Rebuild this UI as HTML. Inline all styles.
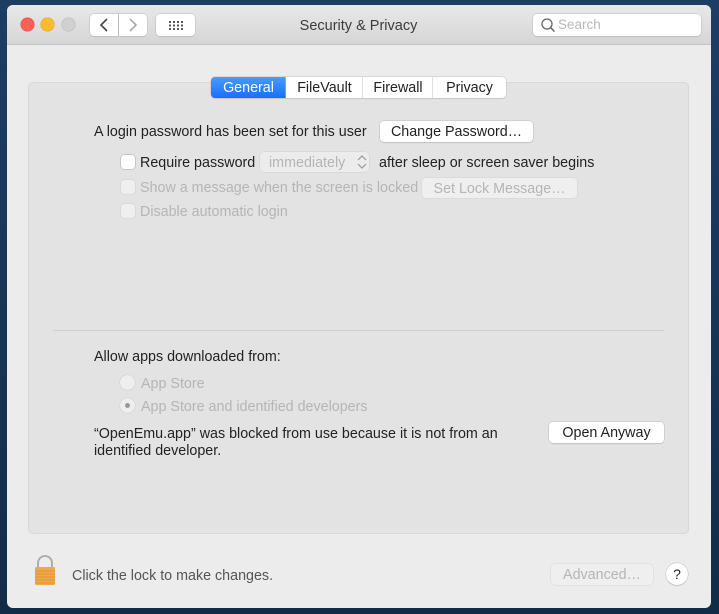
<!DOCTYPE html>
<html><head><meta charset="utf-8"><style>
*{margin:0;padding:0;box-sizing:border-box}
body{width:719px;height:614px;overflow:hidden;background:linear-gradient(180deg,#1d3d63,#163453 60%,#122c48);font-family:"Liberation Sans",sans-serif;font-size:14.3px;color:#222;position:relative}
.a{position:absolute;white-space:nowrap}
.win{position:absolute;left:7px;top:5px;width:704px;height:603px;background:#ececec;border-radius:6px;overflow:hidden}
.tb{position:absolute;left:0;top:0;width:704px;height:40px;background:linear-gradient(#e8e8e8,#d6d6d6);border-bottom:1px solid #c4c4c4}
.dot{position:absolute;top:13px;width:13px;height:13px;border-radius:50%}
.btn{position:absolute;background:#fff;border-radius:4px;box-shadow:0 0 0 .5px #bcbcbc,0 1px 1px rgba(0,0,0,.12);text-align:center;font-size:14.3px;line-height:23px}
.dis{color:#b5b5b5}
.cb{position:absolute;width:14px;height:14px;border-radius:3px;background:#fff;box-shadow:0 0 0 .5px #aaa}
.cbd{background:#efefef;box-shadow:0 0 0 .5px #d0d0d0}
.tab{position:absolute;top:72px;height:21px;line-height:22px;background:#fff;text-align:center;font-size:14.3px;box-shadow:0 0 0 .5px #c0c0c0,0 1px 1px rgba(0,0,0,.1)}
</style></head><body>
<div class="win">
 <div class="tb">
  <div class="dot" style="left:14px;background:#fc5f57;box-shadow:0 0 0 .5px #df4744"></div>
  <div class="dot" style="left:34px;background:#fdbc2e;box-shadow:0 0 0 .5px #de9f24"></div>
  <div class="dot" style="left:55px;background:#d0d0d0;box-shadow:0 0 0 .5px #b8b8b8"></div>
  <div class="btn" style="left:83px;top:9px;width:28px;height:22px;border-radius:4px 0 0 4px"><svg width="28" height="22"><path d="M17 5l-6 6 6 6" fill="none" stroke="#444" stroke-width="1.6"/></svg></div>
  <div class="btn" style="left:112px;top:9px;width:28px;height:22px;border-radius:0 4px 4px 0"><svg width="28" height="22"><path d="M11 5l6 6-6 6" fill="none" stroke="#aaa" stroke-width="1.6"/></svg></div>
  <div class="btn" style="left:149px;top:9px;width:39px;height:22px"><svg width="39" height="22" fill="#555"><g><rect x="13" y="7" width="2" height="2"/><rect x="17" y="7" width="2" height="2"/><rect x="21" y="7" width="2" height="2"/><rect x="25" y="7" width="2" height="2"/><rect x="13" y="10.5" width="2" height="2"/><rect x="17" y="10.5" width="2" height="2"/><rect x="21" y="10.5" width="2" height="2"/><rect x="25" y="10.5" width="2" height="2"/><rect x="13" y="14" width="2" height="2"/><rect x="17" y="14" width="2" height="2"/><rect x="21" y="14" width="2" height="2"/><rect x="25" y="14" width="2" height="2"/></g></svg></div>
  <div class="a" style="left:0;width:703px;text-align:center;top:13px;font-size:14.5px;color:#3c3c3c">Security &amp; Privacy</div>
  <div class="btn" style="left:526px;top:9px;width:168px;height:22px;text-align:left"><svg width="20" height="22" style="position:absolute;left:5px;top:0"><circle cx="9" cy="10" r="5" fill="none" stroke="#666" stroke-width="1.3"/><path d="M12.5 13.5l4 4" stroke="#666" stroke-width="1.5"/></svg><span style="position:absolute;left:25px;top:0;color:#b8b8b8;font-size:13.5px;line-height:22px">Search</span></div>
 </div>
 <div style="position:absolute;left:21px;top:77px;width:661px;height:452px;background:#e3e3e3;border:1px solid #d8d8d8;border-radius:5px"></div>
 <div class="tab" style="left:204px;width:75px;background:linear-gradient(#4a9bfd,#1570fb);color:#fff;border-radius:4px 0 0 4px">General</div>
 <div class="tab" style="left:279px;width:77px">FileVault</div>
 <div class="tab" style="left:356px;width:70px">Firewall</div>
 <div class="tab" style="left:426px;width:73px;border-radius:0 4px 4px 0">Privacy</div>

 <div class="a" style="left:87px;top:119px">A login password has been set for this user</div>
 <div class="btn" style="left:373px;top:116px;width:153px;height:21px">Change Password…</div>
 <div class="cb" style="left:114px;top:150px"></div>
 <div class="a" style="left:133px;top:150px">Require password</div>
 <div class="a" style="left:253px;top:147px;width:109px;height:20px;background:#ececec;border-radius:4px;box-shadow:0 0 0 .5px #d0d0d0"><span class="dis" style="position:absolute;left:9px;top:3px">immediately</span><svg width="12" height="18" style="position:absolute;left:96px;top:1px"><path d="M2 7l4-4 4 4M2 11l4 4 4-4" fill="none" stroke="#999" stroke-width="1.2"/></svg></div>
 <div class="a" style="left:372px;top:150px">after sleep or screen saver begins</div>
 <div class="cb cbd" style="left:114px;top:175px"></div>
 <div class="a dis" style="left:133px;top:175px">Show a message when the screen is locked</div>
 <div class="btn dis" style="left:415px;top:173px;width:155px;height:20px;background:#efefef;box-shadow:0 0 0 .5px #d3d3d3;line-height:22px">Set Lock Message…</div>
 <div class="cb cbd" style="left:114px;top:199px"></div>
 <div class="a dis" style="left:133px;top:199px">Disable automatic login</div>

 <div style="position:absolute;left:46px;top:325px;width:611px;height:1px;background:#cfcfcf"></div>
 <div class="a" style="left:87px;top:344px">Allow apps downloaded from:</div>
 <div style="position:absolute;left:113px;top:370px;width:15px;height:15px;border-radius:50%;background:#eee;box-shadow:0 0 0 .5px #ccc"></div>
 <div class="a dis" style="left:134px;top:371px">App Store</div>
 <div style="position:absolute;left:113px;top:393px;width:15px;height:15px;border-radius:50%;background:#eee;box-shadow:0 0 0 .5px #ccc"><div style="position:absolute;left:5px;top:5px;width:5px;height:5px;border-radius:50%;background:#999"></div></div>
 <div class="a dis" style="left:134px;top:394px">App Store and identified developers</div>
 <div class="a" style="left:87px;top:421px;line-height:17px">“OpenEmu.app” was blocked from use because it is not from an<br>identified developer.</div>
 <div class="btn" style="left:542px;top:417px;width:115px;height:21px">Open Anyway</div>

 <svg width="26" height="36" style="position:absolute;left:25px;top:548px"><path d="M6 14V10a7 7 0 0 1 14 0v4" fill="none" stroke="#a8a8a8" stroke-width="1.8"/><rect x="3" y="14" width="20" height="18" rx="1.5" fill="#f0a84a"/><g stroke="#d98a2c" stroke-width=".8"><path d="M3 18h20M3 21h20M3 24h20M3 27h20M3 30h20"/></g></svg>
 <div class="a" style="left:65px;top:563px;color:#555">Click the lock to make changes.</div>
 <div class="btn dis" style="left:544px;top:559px;width:102px;height:21px;background:#efefef;box-shadow:0 0 0 .5px #d6d6d6">Advanced…</div>
 <div style="position:absolute;left:659px;top:558px;width:22px;height:22px;border-radius:50%;background:#fff;box-shadow:0 0 0 .5px #bbb,0 1px 1px rgba(0,0,0,.15);text-align:center;line-height:22px;font-size:14px">?</div>
</div>
</body></html>
